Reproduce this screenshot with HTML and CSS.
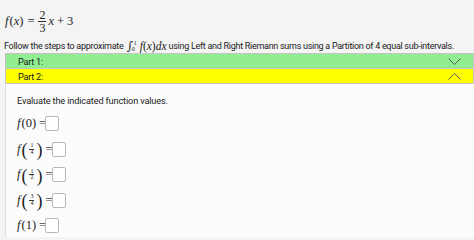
FILE: index.html
```html
<!DOCTYPE html>
<html>
<head>
<meta charset="utf-8">
<link rel="stylesheet" href="styles.css">
</head>
<body>
<div class="page">
  <div class="formula">
    <span class="mi">f</span><span class="mo">(</span><span class="mi">x</span><span class="mo">)</span>
    <span class="rel">=</span>
    <span class="frac"><span class="num">2</span><span class="den">3</span></span><span class="mi">x</span>
    <span class="bin">+</span><span class="mn">3</span>
  </div>
  <p class="instr">Follow the steps to approximate <span class="integral"><span class="intsign">∫</span><span class="limits"><span class="up">1</span><span class="lo">0</span></span></span><span class="m"><span class="mi">f</span>(<span class="mi">x</span>)<span class="mi">dx</span></span> using Left and Right Riemann sums using a Partition of 4 equal sub-intervals.</p>
  <div class="part green">
    <span>Part 1:</span>
    <svg class="chev" width="13" height="7" viewBox="0 0 13 7"><polyline points="0.5,0.5 6.5,6.5 12.5,0.5" fill="none" stroke="#5a5a5a" stroke-width="1"/></svg>
  </div>
  <div class="part yellow">
    <span>Part 2:</span>
    <svg class="chev" width="13" height="7" viewBox="0 0 13 7"><polyline points="0.5,6.5 6.5,0.5 12.5,6.5" fill="none" stroke="#5a5a5a" stroke-width="1"/></svg>
  </div>
  <div class="panel">
    <p class="eval">Evaluate the indicated function values.</p>
    <div class="row"><span class="fn"><span class="mi">f</span>(0)</span><span class="eq">=</span><span class="box"></span></div>
    <div class="row"><span class="fn"><span class="mi">f</span><span class="bp">(</span><span class="sfrac"><span>1</span><span>4</span></span><span class="bp">)</span></span><span class="eq">=</span><span class="box"></span></div>
    <div class="row"><span class="fn"><span class="mi">f</span><span class="bp">(</span><span class="sfrac"><span>1</span><span>2</span></span><span class="bp">)</span></span><span class="eq">=</span><span class="box"></span></div>
    <div class="row"><span class="fn"><span class="mi">f</span><span class="bp">(</span><span class="sfrac"><span>3</span><span>4</span></span><span class="bp">)</span></span><span class="eq">=</span><span class="box"></span></div>
    <div class="row"><span class="fn"><span class="mi">f</span>(1)</span><span class="eq">=</span><span class="box"></span></div>
  </div>
</div>
</body>
</html>
```
FILE: styles.css
```css
html, body {
  margin: 0;
  padding: 0;
  background: #f4f4f4;
}
.page {
  width: 474px;
  height: 237px;
  overflow: hidden;
  font-family: Roboto, "Liberation Sans", sans-serif;
  color: #222;
}
.formula {
  display: flex;
  align-items: center;
  height: 24px;
  padding: 9px 0 0 5px;
  font-family: "Liberation Serif", serif;
  font-size: 12.5px;
  color: #222;
}
.mi {
  font-family: "Liberation Serif", serif;
  font-style: italic;
}
.formula .mi:first-child { margin-right: 1px; }
.rel {
  margin: 0 4px 0 4px;
}
.bin {
  margin: 0 3px 0 3px;
}
.frac {
  display: inline-flex;
  flex-direction: column;
  align-items: center;
  font-size: 12px;
  line-height: 12px;
  margin-right: 2px;
}
.frac .num {
  border-bottom: 1px solid #333;
  padding: 0 1px 0;
}
.instr {
  margin: 6px 0 0 4px;
  font-size: 9px;
  letter-spacing: -0.28px;
  line-height: 14px;
  height: 14px;
  white-space: nowrap;
  display: flex;
  align-items: center;
}
.integral {
  display: inline-flex;
  align-items: center;
  margin-left: 3px;
  letter-spacing: 0;
}
.intsign {
  font-family: "DejaVu Serif", serif;
  font-size: 12px;
  line-height: 13px;
}
.limits {
  display: inline-flex;
  flex-direction: column;
  font-family: "Liberation Serif", serif;
  font-size: 6px;
  line-height: 6px;
  margin-left: 1px;
}
.limits .lo { margin-left: -2px; }
.m {
  font-family: "Liberation Serif", serif;
  font-size: 11.5px;
  letter-spacing: 0;
  margin: 0 2px 0 3px;
}
.part {
  margin-left: 5px;
  height: 14px;
  border: 1px solid #c4c4c4;
  display: flex;
  align-items: center;
  justify-content: space-between;
  padding: 0 12px 0 12px;
  font-size: 9.2px;
  letter-spacing: -0.25px;
}
.green {
  background: #90ee90;
}
.yellow {
  background: #ffff00;
  border-top: none;
}
.chev { display: block; }
.panel {
  margin-left: 5px;
  background: #fcfcfc;
  border-left: 1px solid #e0e0e0;
  padding: 10px 0 0 11px;
  height: 200px;
}
.eval {
  margin: 0 0 3px;
  font-size: 9.2px;
  letter-spacing: -0.15px;
  line-height: 14px;
}
.row {
  display: flex;
  align-items: center;
  height: 25.5px;
  font-family: "Liberation Serif", serif;
  font-size: 12.5px;
  color: #222;
}
.fn {
  display: inline-flex;
  align-items: center;
}
.fn .mi { margin-right: 1px; }
.bp {
  font-size: 18px;
  line-height: 18px;
  transform: scaleY(1.1);
}
.sfrac {
  display: inline-flex;
  flex-direction: column;
  align-items: center;
  font-size: 6px;
  line-height: 5.5px;
  margin: 0 2px;
}
.sfrac span:first-child {
  border-bottom: 0.8px solid #333;
  padding: 0 1px;
}
.eq {
  margin-left: 3px;
  color: #444;
}
.box {
  display: inline-block;
  width: 12px;
  height: 13px;
  border: 1px solid #b8b8b8;
  border-radius: 2px;
  background: #fff;
  margin-left: -1px;
}
```
